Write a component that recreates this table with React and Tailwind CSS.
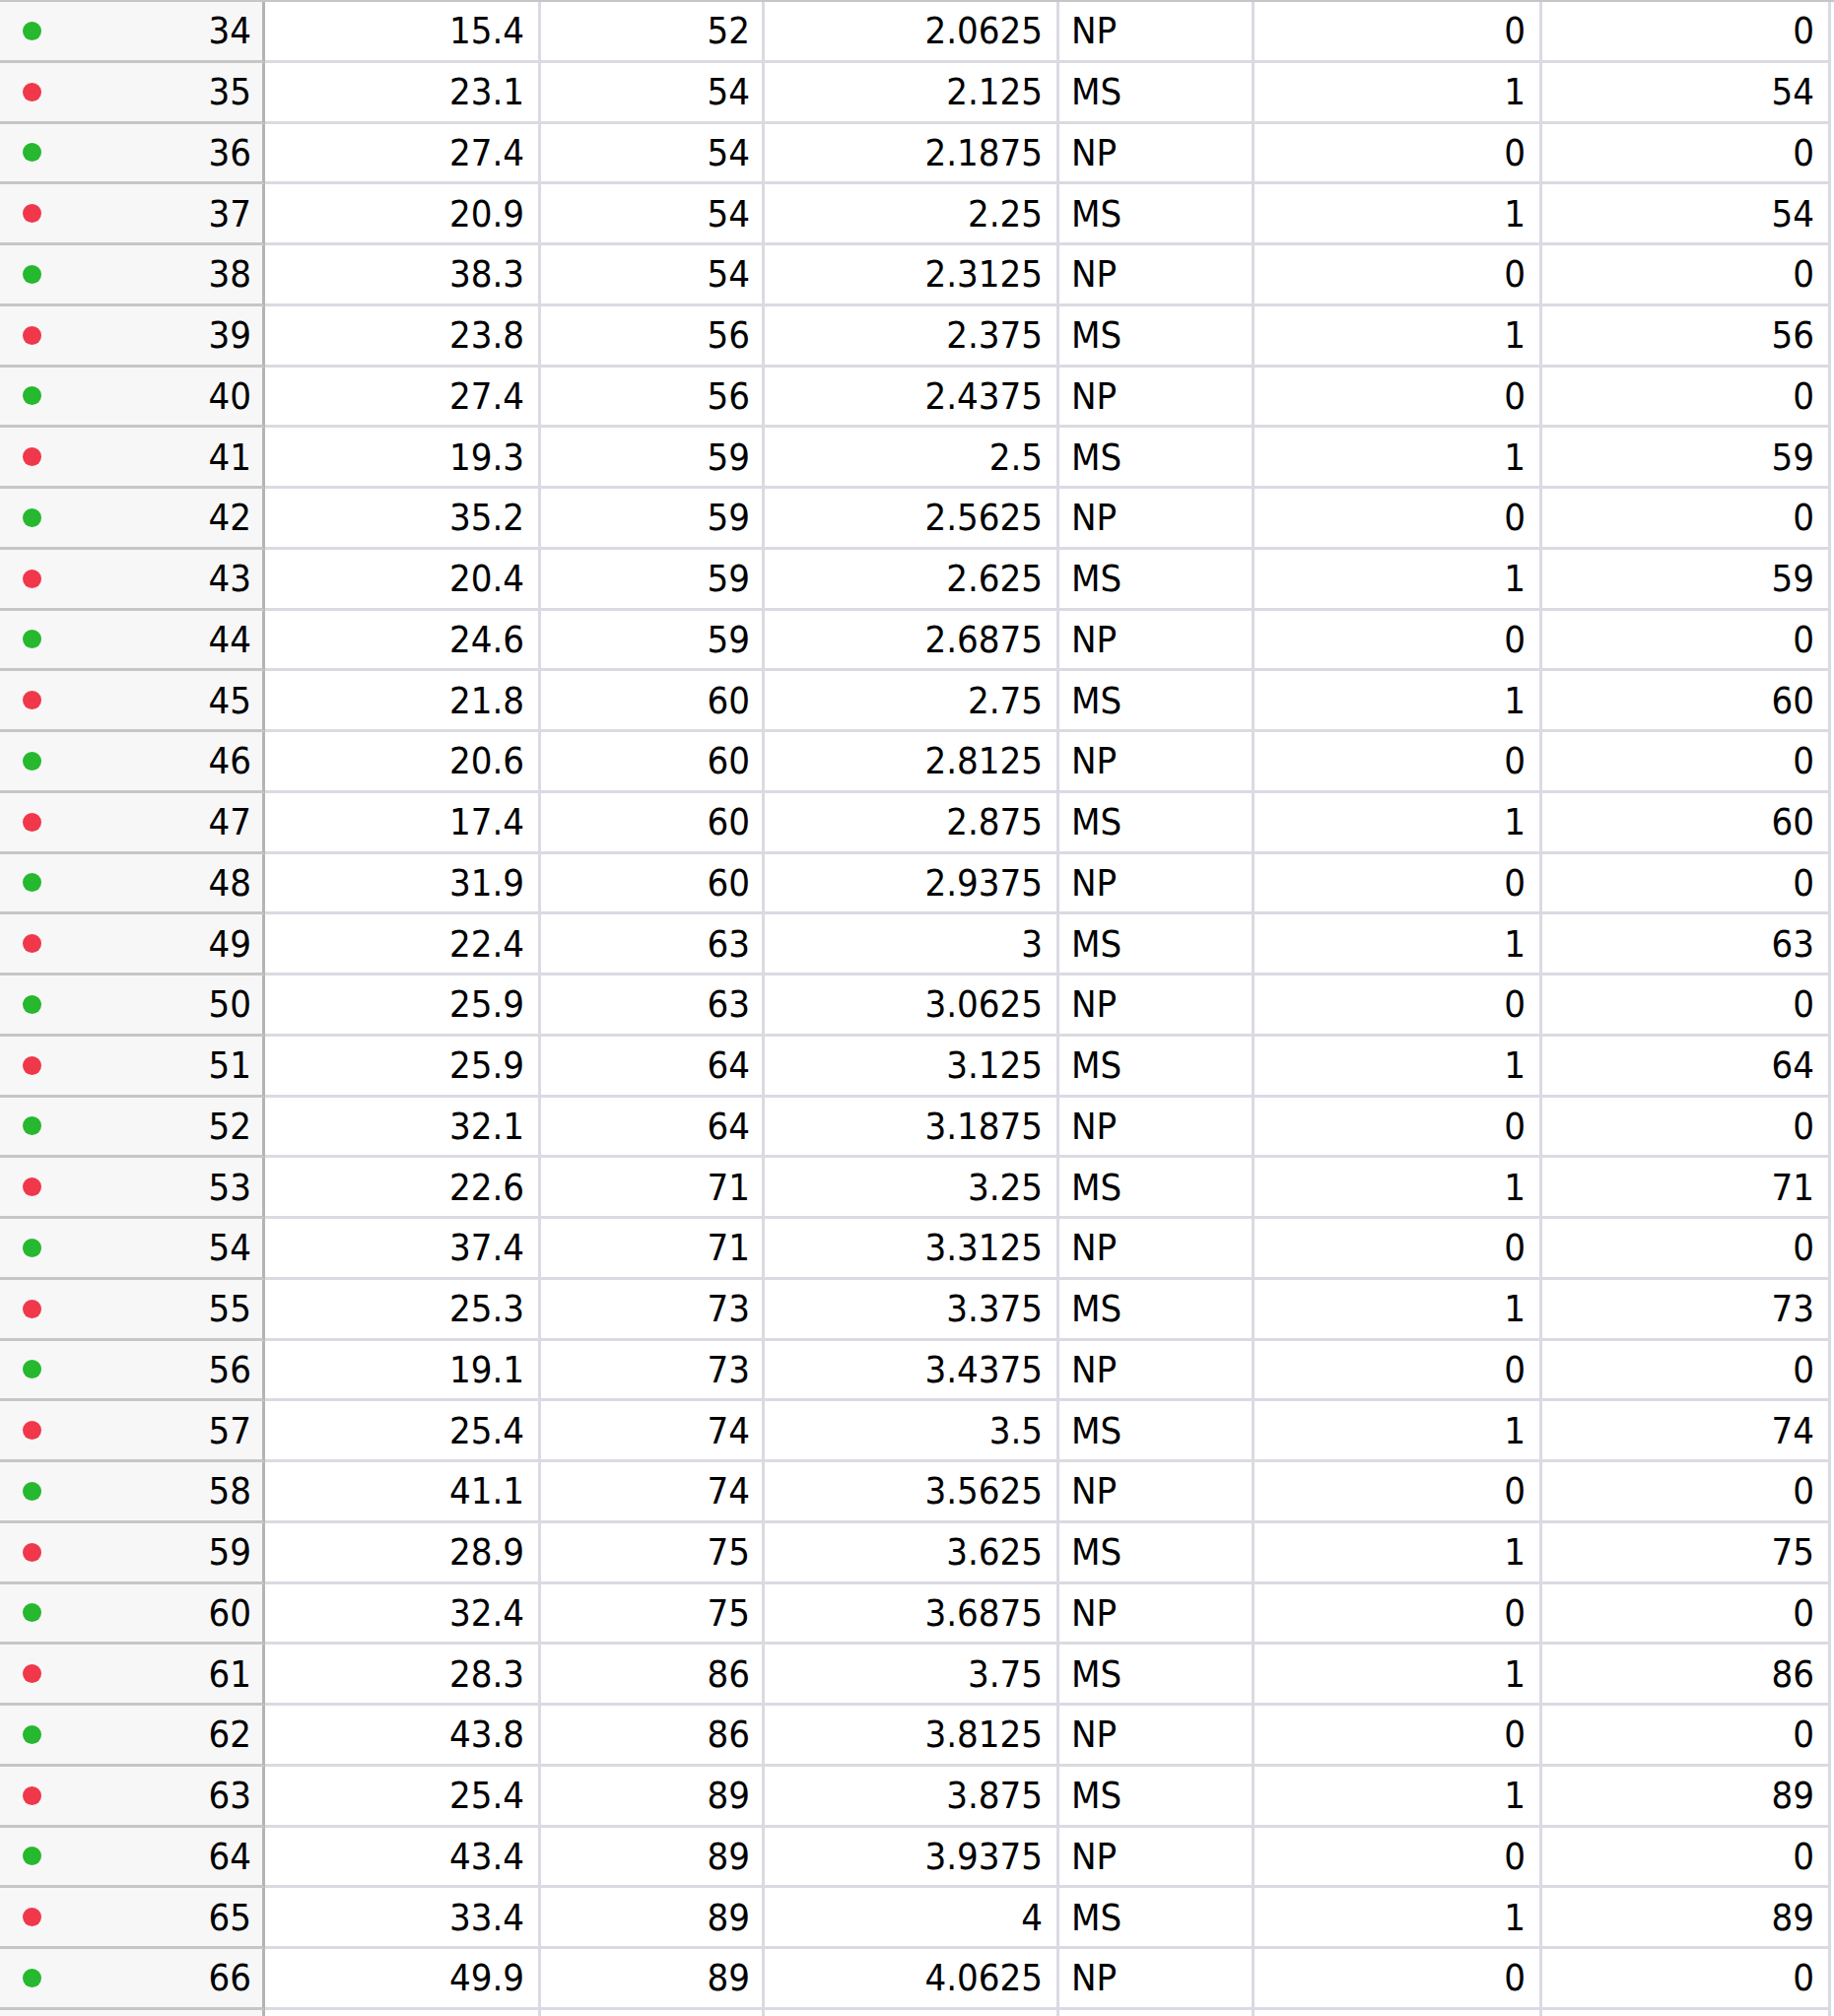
const rows = [
  ['34', '15.4', '52', '2.0625', 'NP', '0', '0'],
  ['35', '23.1', '54', '2.125', 'MS', '1', '54'],
  ['36', '27.4', '54', '2.1875', 'NP', '0', '0'],
  ['37', '20.9', '54', '2.25', 'MS', '1', '54'],
  ['38', '38.3', '54', '2.3125', 'NP', '0', '0'],
  ['39', '23.8', '56', '2.375', 'MS', '1', '56'],
  ['40', '27.4', '56', '2.4375', 'NP', '0', '0'],
  ['41', '19.3', '59', '2.5', 'MS', '1', '59'],
  ['42', '35.2', '59', '2.5625', 'NP', '0', '0'],
  ['43', '20.4', '59', '2.625', 'MS', '1', '59'],
  ['44', '24.6', '59', '2.6875', 'NP', '0', '0'],
  ['45', '21.8', '60', '2.75', 'MS', '1', '60'],
  ['46', '20.6', '60', '2.8125', 'NP', '0', '0'],
  ['47', '17.4', '60', '2.875', 'MS', '1', '60'],
  ['48', '31.9', '60', '2.9375', 'NP', '0', '0'],
  ['49', '22.4', '63', '3', 'MS', '1', '63'],
  ['50', '25.9', '63', '3.0625', 'NP', '0', '0'],
  ['51', '25.9', '64', '3.125', 'MS', '1', '64'],
  ['52', '32.1', '64', '3.1875', 'NP', '0', '0'],
  ['53', '22.6', '71', '3.25', 'MS', '1', '71'],
  ['54', '37.4', '71', '3.3125', 'NP', '0', '0'],
  ['55', '25.3', '73', '3.375', 'MS', '1', '73'],
  ['56', '19.1', '73', '3.4375', 'NP', '0', '0'],
  ['57', '25.4', '74', '3.5', 'MS', '1', '74'],
  ['58', '41.1', '74', '3.5625', 'NP', '0', '0'],
  ['59', '28.9', '75', '3.625', 'MS', '1', '75'],
  ['60', '32.4', '75', '3.6875', 'NP', '0', '0'],
  ['61', '28.3', '86', '3.75', 'MS', '1', '86'],
  ['62', '43.8', '86', '3.8125', 'NP', '0', '0'],
  ['63', '25.4', '89', '3.875', 'MS', '1', '89'],
  ['64', '43.4', '89', '3.9375', 'NP', '0', '0'],
  ['65', '33.4', '89', '4', 'MS', '1', '89'],
  ['66', '49.9', '89', '4.0625', 'NP', '0', '0'],
];

const cell = 'h-[61.75px] flex items-center border-r-[3px] border-b-[3px] border-[#dadae2] bg-white';

const Row = ({ row }) => {
  const [id, a, b, c, kind, flag, val] = row;
  const miss = kind === 'MS';
  return (
    <>
      <div className="h-[61.75px] flex items-center justify-between pl-[23px] pr-[11px] bg-[#f7f7f7] border-r-[3px] border-b-[3px] border-r-[#b4b4b4] border-b-[#c6c6c6]">
        <span className={`w-[19px] h-[19px] rounded-full ${miss ? 'bg-[#f0384a]' : 'bg-[#26b82e]'}`} />
        <span>{id}</span>
      </div>
      <div className={`${cell} justify-end pr-[14px]`}>{a}</div>
      <div className={`${cell} justify-end pr-[12px]`}>{b}</div>
      <div className={`${cell} justify-end pr-[14px]`}>{c}</div>
      <div className={`${cell} justify-start pl-[12px]`}>{kind}</div>
      <div className={`${cell} justify-end pr-[14px]`}>{flag}</div>
      <div className={`${cell} justify-end pr-[14px]`}>{val}</div>
    </>
  );
};

export default function App() {
  return (
    <div className="w-[1861px] h-[2046px] overflow-hidden bg-white">
      <div className="grid grid-cols-[269px_280px_227px_299px_198px_292px_293px] border-t-2 border-[#c6c6c6] text-black text-[38px] leading-none font-['DejaVu_Sans_Condensed','DejaVu_Sans',sans-serif] [font-stretch:condensed]">
        {rows.map((row) => (
          <Row key={row[0]} row={row} />
        ))}
        {/* next row, only its top shows */}
        <div className="h-[61.75px] bg-[#f7f7f7] border-r-[3px] border-r-[#b4b4b4]" />
        <div className="h-[61.75px] border-r-[3px] border-[#dadae2]" />
        <div className="h-[61.75px] border-r-[3px] border-[#dadae2]" />
        <div className="h-[61.75px] border-r-[3px] border-[#dadae2]" />
        <div className="h-[61.75px] border-r-[3px] border-[#dadae2]" />
        <div className="h-[61.75px] border-r-[3px] border-[#dadae2]" />
        <div className="h-[61.75px] border-r-[3px] border-[#dadae2]" />
      </div>
    </div>
  );
}
